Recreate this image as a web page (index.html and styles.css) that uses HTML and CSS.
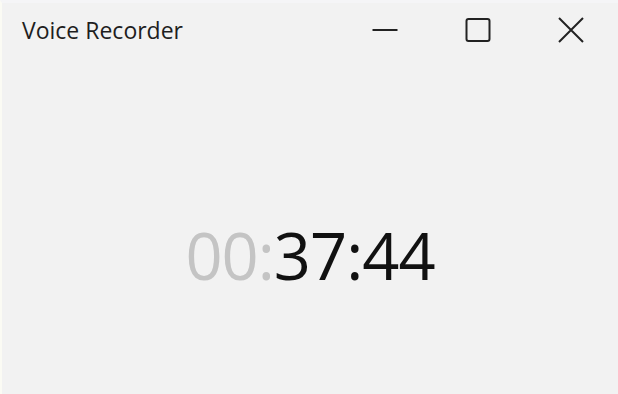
FILE: index.html
```html
<!DOCTYPE html>
<html lang="en">
<head>
<meta charset="utf-8">
<title>Voice Recorder</title>
<link rel="stylesheet" href="styles.css">
</head>
<body>
<div class="window">
  <header class="titlebar">
    <div class="title">Voice Recorder</div>
    <div class="controls">
      <button class="ctl" aria-label="Minimize">
        <svg width="26" height="26" viewBox="0 0 26 26"><path d="M0.5 13h25" stroke="#222" stroke-width="2" fill="none"/></svg>
      </button>
      <button class="ctl" aria-label="Maximize">
        <svg width="26" height="26" viewBox="0 0 26 26"><rect x="1.5" y="2" width="23" height="22" rx="2" stroke="#222" stroke-width="2" fill="none"/></svg>
      </button>
      <button class="ctl" aria-label="Close">
        <svg width="26" height="26" viewBox="0 0 26 26"><path d="M1 1L25 25M25 1L1 25" stroke="#222" stroke-width="2" fill="none"/></svg>
      </button>
    </div>
  </header>
  <main class="content">
    <div class="timer"><span class="dim">00:</span><span class="live">37:44</span></div>
  </main>
</div>
</body>
</html>
```
FILE: styles.css
```css
* { box-sizing: border-box; }
html, body { margin: 0; padding: 0; }
body {
  width: 618px;
  height: 394px;
  background: #f2f2f2;
  font-family: "Open Sans", "Noto Sans", sans-serif;
  overflow: hidden;
}
.window {
  width: 618px;
  height: 394px;
  display: flex;
  flex-direction: column;
  border-left: 2px solid #fbfbf4;
  border-top: 3px solid #f5f5f7;
}
.titlebar {
  height: 54px;
  display: flex;
  align-items: center;
  justify-content: space-between;
  padding-left: 20px;
  padding-right: 34px;
}
.title {
  font-size: 23px;
  color: #1e1e1e;
  margin-top: -1px;
}
.controls {
  display: flex;
  gap: 67px;
  align-items: center;
}
.ctl {
  border: 0;
  background: transparent;
  padding: 0;
  width: 26px;
  height: 26px;
  display: block;
}
.ctl svg { display: block; }
.content {
  flex: 1;
  display: flex;
  justify-content: center;
  padding-top: 166px;
}
.timer {
  font-size: 65px;
  line-height: 1;
  font-weight: 400;
  letter-spacing: -1px;
}
.dim { color: #c4c4c4; }
.live { color: #111; }
```
